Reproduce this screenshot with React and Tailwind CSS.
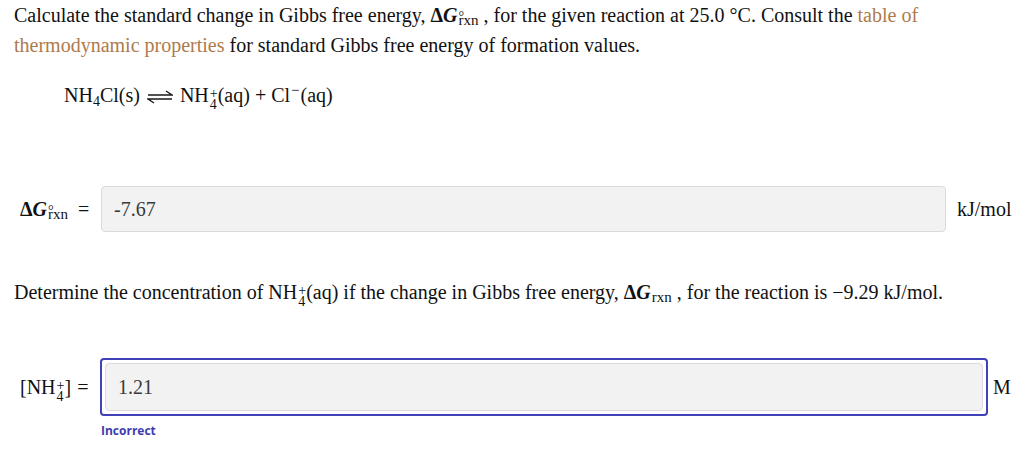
export default function App() {
  const serif = { fontFamily: '"Liberation Serif", "Times New Roman", serif' };

  // ΔG with the ° sitting over the rxn subscript
  const DeltaG = ({ deg = true }) => (
    <span className="whitespace-nowrap">
      <span className="font-bold">Δ</span>
      <i className="font-bold">G</i>
      <span className="relative inline-block leading-none text-[15px] ml-[1px]">
        {deg && <span className="absolute left-[0px] top-[0px] text-[14px] leading-none">°</span>}
        <span className="relative top-[3px]">rxn</span>
      </span>
    </span>
  );

  const NH4 = () => (
    <span className="whitespace-nowrap">
      NH
      <span className="inline-flex flex-col align-middle text-[14px] leading-[11px] relative top-[2px] ml-[1px]">
        <span>+</span>
        <span>4</span>
      </span>
    </span>
  );

  const Equilibrium = () => (
    <svg width="26" height="14" viewBox="0 0 26 14" className="inline-block align-middle mx-[7px]">
      <path d="M1 5 H25 L19 1" fill="none" stroke="#1a1a1a" strokeWidth="1.4" />
      <path d="M25 9 H1 L7 13" fill="none" stroke="#1a1a1a" strokeWidth="1.4" />
    </svg>
  );

  return (
    <div className="w-[1024px] h-[472px] bg-white text-[#111] text-[20px]" style={serif}>
      <div className="pl-[14px] pr-[20px] leading-[30px]">
        <p>
          Calculate the standard change in Gibbs free energy, <DeltaG /> , for the given reaction at 25.0 °C. Consult
          the <span className="text-[#ad7b4e]">table of thermodynamic properties</span> for standard Gibbs free energy
          of formation values.
        </p>
        <p className="pl-[50px] mt-[20px]">
          NH<sub className="text-[14px]">4</sub>Cl(s)
          <Equilibrium />
          <NH4 />(aq) + Cl<sup className="text-[15px] mx-[1px]">−</sup>(aq)
        </p>
      </div>

      <div className="flex items-center mt-[76px] pl-[20px] pr-[12px]">
        <div className="w-[81px] flex items-center gap-[10px]">
          <DeltaG />
          <span>=</span>
        </div>
        <div className="flex-1 h-[46px] bg-[#f2f2f2] border border-[#dadada] rounded-[4px] flex items-center pl-[12px] text-[#3a3a3a]">
          -7.67
        </div>
        <div className="w-[66px] pl-[11px]">kJ/mol</div>
      </div>

      <p className="pl-[14px] mt-[45px] leading-[30px]">
        Determine the concentration of <NH4 />(aq) if the change in Gibbs free energy, <DeltaG deg={false} /> , for the
        reaction is −9.29 kJ/mol.
      </p>

      <div className="flex items-center mt-[51px] pl-[20px] pr-[12px]">
        <div className="w-[80px] flex items-center gap-[6px] whitespace-nowrap">
          <span>
            [<NH4 />]
          </span>
          <span>=</span>
        </div>
        <div className="flex-1 h-[58px] border-2 border-[#4040b8] rounded-[4px] p-[3px]">
          <div className="h-full bg-[#f2f2f2] border border-[#dadada] rounded-[4px] flex items-center pl-[12px] text-[#3a3a3a]">
            1.21
          </div>
        </div>
        <div className="w-[24px] pl-[5px]">M</div>
      </div>
      <div
        className="pl-[101px] pt-[6px] text-[12px] font-bold text-[#3c3cb0]"
        style={{ fontFamily: '"Open Sans", "Liberation Sans", sans-serif' }}
      >
        Incorrect
      </div>
    </div>
  );
}
